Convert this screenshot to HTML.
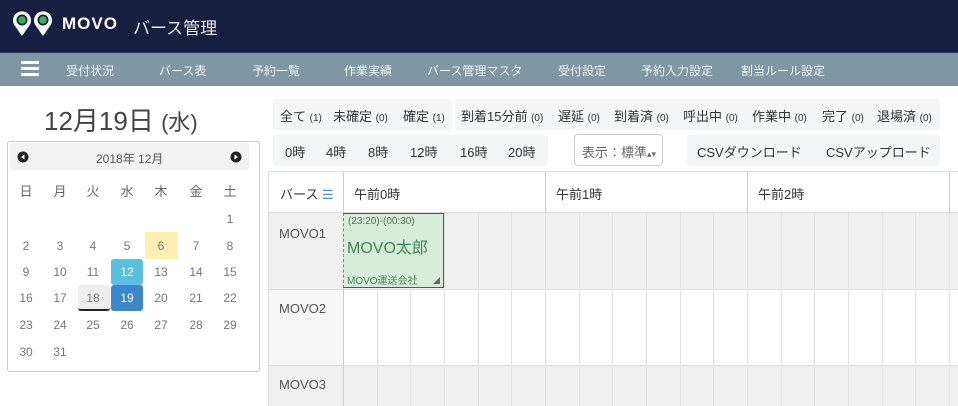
<!DOCTYPE html>
<html><head><meta charset="utf-8"><style>
*{margin:0;padding:0;box-sizing:border-box}
body{width:958px;height:406px;overflow:hidden;background:#fff;font-family:"Liberation Sans","Noto Sans CJK JP",sans-serif;position:relative;color:#333}
.a{position:absolute;white-space:nowrap}
#hd{left:0;top:0;width:958px;height:52px;background:#161f3f}
#nav{left:0;top:52px;width:958px;height:34px;background:#7f96a5;border-top:1px solid #2a3558}
.nv{top:62px;font-size:12px;color:#f2f4f6}
.bg{background:#f4f5f7;border-radius:3px}
.f{font-size:13px;color:#333;top:106px}
.f small{font-size:10px}
.h{font-size:13px;color:#333;top:142px}
.cal{font-size:12px;color:#777;width:34px;text-align:center}
.vl{position:absolute;top:213px;width:1px;height:193px;background:#e2e2e2}
</style></head><body>
<div class="a" id="hd"></div>
<svg class="a" style="left:12px;top:10px" width="44" height="28" viewBox="0 0 44 28">
<path d="M10 26 L3 16 A9 9 0 1 1 17 16 Z" fill="#fff"/><circle cx="10" cy="10" r="5.5" fill="#161f3f"/><circle cx="10" cy="10" r="3.8" fill="#3fae5a"/>
<path d="M31 26 L24 16 A9 9 0 1 1 38 16 Z" fill="#fff"/><circle cx="31" cy="10" r="5.5" fill="#161f3f"/><circle cx="31" cy="10" r="3.8" fill="#3fae5a"/>
</svg>
<div class="a" style="left:62px;top:14px;font-size:17px;font-weight:bold;color:#fff;letter-spacing:1px">MOVO</div>
<div class="a" style="left:133px;top:14px;font-size:17px;color:#e6e8ee">バース管理</div>
<div class="a" id="nav"></div>
<div class="a" style="left:21px;top:61px;width:18px;height:3px;background:#fff;box-shadow:0 6px 0 #fff,0 12px 0 #fff"></div>
<div class="a nv" style="left:66px">受付状況</div>
<div class="a nv" style="left:159px">バース表</div>
<div class="a nv" style="left:252px">予約一覧</div>
<div class="a nv" style="left:344px">作業実績</div>
<div class="a nv" style="left:427px">バース管理マスタ</div>
<div class="a nv" style="left:558px">受付設定</div>
<div class="a nv" style="left:641px">予約入力設定</div>
<div class="a nv" style="left:741px">割当ルール設定</div>

<div class="a" style="left:44px;top:101px;font-size:26px;color:#444">12月19日 <span style="font-size:22px">(水)</span></div>
<div class="a" style="left:7px;top:141px;width:253px;height:231px;border:1px solid #ccc;border-radius:3px"></div>
<div class="a" style="left:10px;top:143px;width:239px;height:27px;background:#f2f2f2;border-radius:3px"></div>
<svg class="a" style="left:17px;top:151px" width="12" height="12"><circle cx="6" cy="6" r="5.5" fill="#222"/><path d="M7.5 3.5 L4 6 L7.5 8.5Z" fill="#fff"/></svg>
<svg class="a" style="left:230px;top:151px" width="12" height="12"><circle cx="6" cy="6" r="5.5" fill="#222"/><path d="M4.5 3.5 L8 6 L4.5 8.5Z" fill="#fff"/></svg>
<div class="a" style="left:96px;top:150px;font-size:12px;color:#555">2018年 12月</div>
<div class="a" style="left:145px;top:232px;width:33px;height:27px;background:#fdefb2"></div>
<div class="a" style="left:111px;top:259px;width:32px;height:26px;background:#5bc0de;border-radius:3px"></div>
<div class="a" style="left:111px;top:285px;width:32px;height:26px;background:#3a87c9;border-radius:3px"></div>
<div class="a" style="left:78px;top:285px;width:32px;height:26px;background:#eee;border-radius:3px;border-bottom:2px solid #222"></div>
<div id="calg"></div>
<script>
var xs=[9,43,76,110,144,179,213],s='';
var wd=['日','月','火','水','木','金','土'];
wd.forEach(function(w,i){s+='<div class="a cal" style="left:'+xs[i]+'px;top:181px;font-size:13px;color:#666">'+w+'</div>';});
var ys=[212,239,265,291,318,345],d=1,r=0;
for(d=1;d<=31;d++){var col=(d+5)%7;if(d>1&&col==0)r++;var clr=(d==12||d==19)?'#fff':'#777';
s+='<div class="a cal" style="left:'+xs[col]+'px;top:'+ys[r]+'px;color:'+clr+'">'+d+'</div>';}
document.getElementById('calg').innerHTML=s;
</script>

<div class="a bg" style="left:273px;top:99px;width:179px;height:31px"></div>
<div class="a bg" style="left:455px;top:99px;width:485px;height:31px"></div>
<div class="a f" style="left:280px">全て <small>(1)</small></div>
<div class="a f" style="left:333px">未確定 <small>(0)</small></div>
<div class="a f" style="left:403px">確定 <small>(1)</small></div>
<div class="a f" style="left:461px">到着15分前 <small>(0)</small></div>
<div class="a f" style="left:558px">遅延 <small>(0)</small></div>
<div class="a f" style="left:614px">到着済 <small>(0)</small></div>
<div class="a f" style="left:683px">呼出中 <small>(0)</small></div>
<div class="a f" style="left:752px">作業中 <small>(0)</small></div>
<div class="a f" style="left:822px">完了 <small>(0)</small></div>
<div class="a f" style="left:877px">退場済 <small>(0)</small></div>
<div class="a bg" style="left:273px;top:135px;width:275px;height:31px"></div>
<div class="a h" style="left:285px">0時</div><div class="a h" style="left:326px">4時</div><div class="a h" style="left:368px">8時</div><div class="a h" style="left:410px">12時</div><div class="a h" style="left:460px">16時</div><div class="a h" style="left:508px">20時</div>
<div class="a" style="left:574px;top:134px;width:89px;height:32px;border:1px solid #ccc;border-radius:4px"></div>
<div class="a h" style="left:582px;color:#666">表示：標準<span style="font-size:9px">▴▾</span></div>
<div class="a bg" style="left:687px;top:135px;width:253px;height:31px"></div>
<div class="a h" style="left:697px">CSVダウンロード</div><div class="a h" style="left:826px">CSVアップロード</div>

<div class="a" style="left:268px;top:171px;width:690px;height:1px;background:#ddd"></div>
<div class="a" style="left:268px;top:171px;width:1px;height:235px;background:#ddd"></div>
<div class="a" style="left:269px;top:213px;width:689px;height:76px;background:#f0f0f0"></div>
<div class="a" style="left:269px;top:365px;width:689px;height:41px;background:#f0f0f0"></div>
<div class="a" style="left:269px;top:289px;width:74px;height:76px;background:#f6f6f6"></div>
<div class="a" style="left:268px;top:212px;width:690px;height:1px;background:#ddd"></div>
<div class="a" style="left:268px;top:289px;width:690px;height:1px;background:#ddd"></div>
<div class="a" style="left:268px;top:365px;width:690px;height:1px;background:#ddd"></div>
<div id="vg"></div>
<script>
var v='';for(var i=1;i<19;i++){var x=Math.round(343+i*33.67);v+='<div class="vl" style="left:'+x+'px"></div>';}
[343,545,747,949].forEach(function(x){v+='<div class="a" style="left:'+x+'px;top:172px;width:1px;height:'+(x==343?234:41)+'px;background:#ccc"></div>';});
document.getElementById('vg').innerHTML=v;
</script>
<div class="a" style="left:280px;top:184px;font-size:13px;color:#333">バース <span style="color:#4a8fd0">☰</span></div>
<div class="a" style="left:354px;top:184px;font-size:13px">午前0時</div>
<div class="a" style="left:556px;top:184px;font-size:13px">午前1時</div>
<div class="a" style="left:758px;top:184px;font-size:13px">午前2時</div>
<div class="a" style="left:279px;top:226px;font-size:13px;color:#555">MOVO1</div>
<div class="a" style="left:279px;top:301px;font-size:13px;color:#555">MOVO2</div>
<div class="a" style="left:279px;top:377px;font-size:13px;color:#555">MOVO3</div>
<div class="a" style="left:343px;top:213px;width:101px;height:75px;background:#d8ecdb;border:1px solid #555;border-left:1px dashed #888"></div>
<div class="a" style="left:348px;top:216px;font-size:10px;color:#4a7a55">(23:20)-(00:30)</div>
<div class="a" style="left:347px;top:234px;font-size:16px;color:#3d8a50">MOVO太郎</div>
<div class="a" style="left:347px;top:272px;font-size:10px;color:#4a8a5a">MOVO運送会社</div>
<div class="a" style="left:433px;top:276px;font-size:7px;color:#666">◢</div>
</body></html>
